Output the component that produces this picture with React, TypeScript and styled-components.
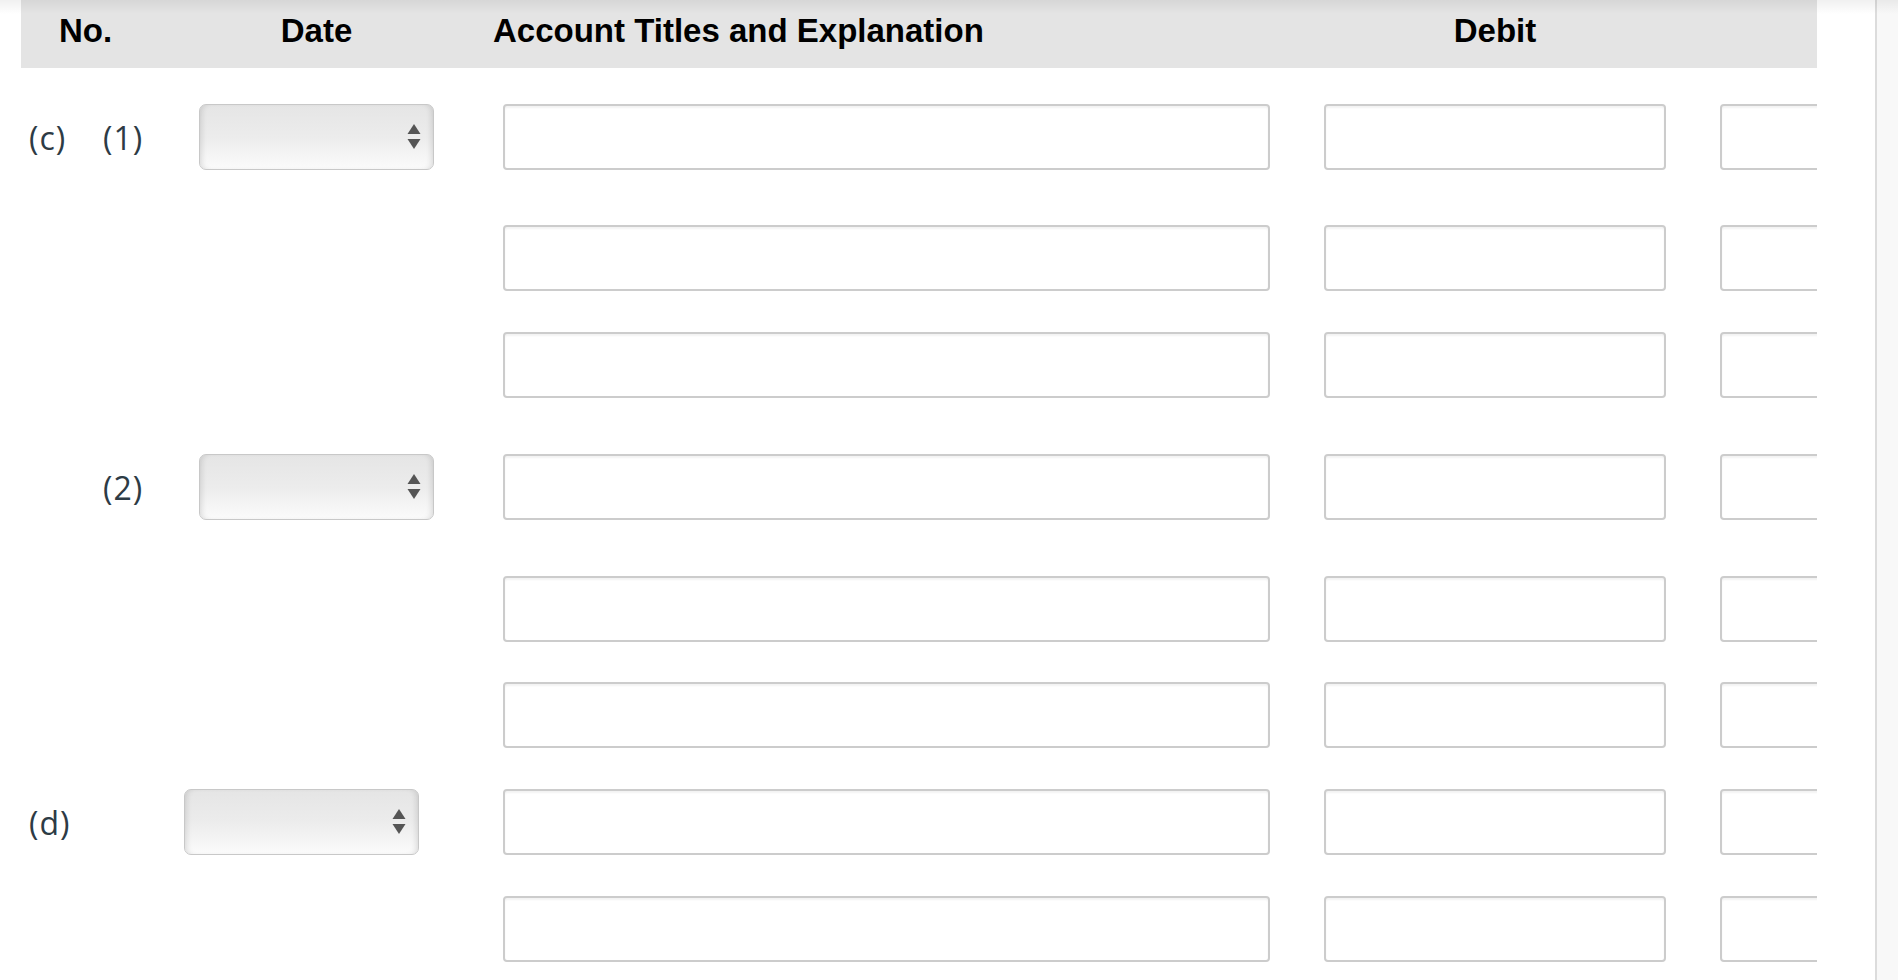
import React from "react";
import styled, { createGlobalStyle } from "styled-components";

const GlobalStyle = createGlobalStyle`
  html, body {
    margin: 0;
    padding: 0;
    background: #ffffff;
  }
`;

const COLUMNS = "154px 283px 839px 396px 396px";

interface EntryRow {
  readonly label?: string;
  readonly sub?: string;
  readonly hasDate: boolean;
  readonly gap: number;
  readonly shift?: boolean;
}

const rows: EntryRow[] = [
  { label: "(c)", sub: "(1)", hasDate: true, gap: 36 },
  { hasDate: false, gap: 55 },
  { hasDate: false, gap: 41 },
  { sub: "(2)", hasDate: true, gap: 56 },
  { hasDate: false, gap: 56 },
  { hasDate: false, gap: 40 },
  { label: "(d)", hasDate: true, gap: 41, shift: true },
  { hasDate: false, gap: 41 }
];

const SelectArrows = () => (
  <svg width="14" height="26" viewBox="0 0 14 26">
    <polygon points="7,0 13.5,10 0.5,10" fill="#555" />
    <polygon points="0.5,15 13.5,15 7,25" fill="#555" />
  </svg>
);

export default function App() {
  return (
    <>
      <GlobalStyle />
      <Page>
        <Main>
          <Scroller>
            <Table>
              <HeaderRow>
                <HeadCell $align="left" $pad={38}>No.</HeadCell>
                <HeadCell $align="center">Date</HeadCell>
                <HeadCell $align="left" $pad={35}>Account Titles and Explanation</HeadCell>
                <HeadCell $align="center">Debit</HeadCell>
                <HeadCell $align="center" />
              </HeaderRow>
              {rows.map((row, i) => (
                <BodyRow key={i} $gap={row.gap}>
                  <NoCell>
                    <Label>{row.label ?? ""}</Label>
                    <Label>{row.sub ?? ""}</Label>
                  </NoCell>
                  <DateCell>
                    {row.hasDate && (
                      <SelectBox $shift={row.shift}>
                        <SelectArrows />
                      </SelectBox>
                    )}
                  </DateCell>
                  <AccountCell>
                    <TextInput $width={767} />
                  </AccountCell>
                  <AmountCell>
                    <TextInput $width={342} />
                  </AmountCell>
                  <AmountCell>
                    <TextInput $width={342} />
                  </AmountCell>
                </BodyRow>
              ))}
            </Table>
          </Scroller>
        </Main>
        <SideStrip />
      </Page>
    </>
  );
}

const Page = styled.div`
  position: relative;
  display: flex;
  width: 1898px;
  height: 980px;
  overflow: hidden;

  &::before {
    content: "";
    position: absolute;
    top: 0;
    left: 0;
    right: 0;
    height: 14px;
    background: linear-gradient(rgba(0, 0, 0, 0.06), rgba(0, 0, 0, 0));
    pointer-events: none;
    z-index: 2;
  }
`;

const Main = styled.div`
  width: 1877px;
  box-sizing: border-box;
  padding-left: 21px;
  border-right: 2px solid #dcdcdc;
`;

const SideStrip = styled.div`
  flex: 1;
  background: #f8f8f8;
`;

const Scroller = styled.div`
  width: 1796px;
  overflow: hidden;
`;

const Table = styled.div`
  width: 2068px;
`;

const HeaderRow = styled.div`
  display: grid;
  grid-template-columns: ${COLUMNS};
  box-sizing: border-box;
  height: 68px;
  padding-bottom: 6px;
  background: #e4e4e4;
  align-items: center;
`;

const HeadCell = styled.div<{ $align: "left" | "center"; $pad?: number }>`
  font-family: "Liberation Sans", Arial, sans-serif;
  font-weight: bold;
  font-size: 33px;
  color: #000;
  text-align: ${(p) => p.$align};
  padding-left: ${(p) => p.$pad ?? 0}px;
  white-space: nowrap;
`;

const BodyRow = styled.div<{ $gap: number }>`
  display: grid;
  grid-template-columns: ${COLUMNS};
  margin-top: ${(p) => p.$gap}px;
  height: 66px;
  align-items: center;
`;

const NoCell = styled.div`
  display: grid;
  grid-template-columns: 74px auto;
  padding-left: 8px;
`;

const Label = styled.span`
  font-family: "Open Sans", sans-serif;
  font-size: 32px;
  letter-spacing: 1px;
  color: #2d3b45;
`;

const DateCell = styled.div`
  display: flex;
  justify-content: center;
`;

const SelectBox = styled.div<{ $shift?: boolean }>`
  box-sizing: border-box;
  width: 235px;
  height: 66px;
  margin-right: ${(p) => (p.$shift ? 30 : 0)}px;
  display: flex;
  align-items: center;
  justify-content: flex-end;
  padding-right: 12px;
  border: 1.5px solid #c8c8c8;
  border-radius: 7px;
  background: linear-gradient(#e5e5e5, #ececec 50%, #fbfbfb);
  box-shadow: inset 5px 0 6px -4px rgba(0, 0, 0, 0.14),
    inset -5px 0 6px -4px rgba(0, 0, 0, 0.14);
`;

const AccountCell = styled.div`
  padding-left: 45px;
`;

const AmountCell = styled.div`
  display: flex;
  justify-content: center;
`;

const TextInput = styled.div<{ $width: number }>`
  box-sizing: border-box;
  width: ${(p) => p.$width}px;
  height: 66px;
  border: 2px solid #cccccc;
  border-radius: 4px;
  background: #fff;
  box-shadow: inset 0 2px 2px rgba(0, 0, 0, 0.05);
`;
